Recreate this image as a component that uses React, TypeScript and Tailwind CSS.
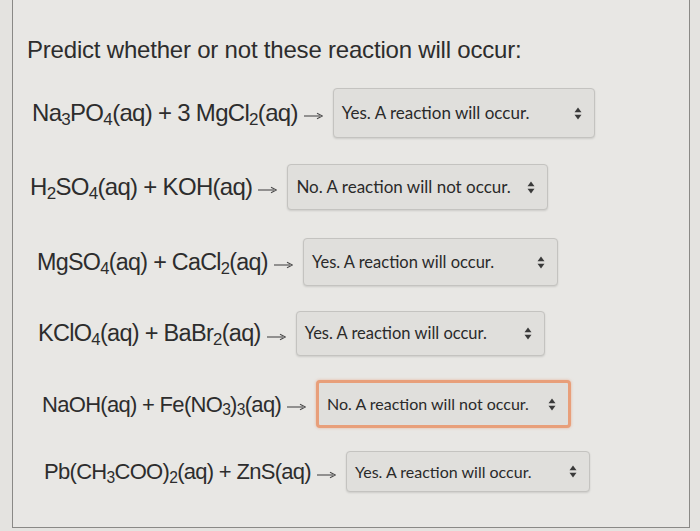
import React from 'react';

type Part = { t: string; sub?: boolean };

type Row = {
  parts: Part[];
  answer: string;
  rowClass: string;
  textClass: string;
  answerClass: string;
  selectClass: string;
  focused?: boolean;
};

const s = (t: string): Part => ({ t, sub: true });
const n = (t: string): Part => ({ t });

const rows: Row[] = [
  {
    parts: [n('Na'), s('3'), n('PO'), s('4'), n('(aq) + 3 MgCl'), s('2'), n('(aq)')],
    answer: 'Yes. A reaction will occur.',
    rowClass: 'mt-[23px] pl-[31px]',
    textClass: 'text-[24px]',
    answerClass: 'text-[17px]',
    selectClass: 'w-[262px] h-[50px]',
  },
  {
    parts: [n('H'), s('2'), n('SO'), s('4'), n('(aq) + KOH(aq)')],
    answer: 'No. A reaction will not occur.',
    rowClass: 'mt-[26px] pl-[29px]',
    textClass: 'text-[24px]',
    answerClass: 'text-[17px]',
    selectClass: 'w-[261px] h-[46px]',
  },
  {
    parts: [n('MgSO'), s('4'), n('(aq) + CaCl'), s('2'), n('(aq)')],
    answer: 'Yes. A reaction will occur.',
    rowClass: 'mt-[28px] pl-[36px]',
    textClass: 'text-[23.3px]',
    answerClass: 'text-[16.5px]',
    selectClass: 'w-[255px] h-[48px]',
  },
  {
    parts: [n('KClO'), s('4'), n('(aq) + BaBr'), s('2'), n('(aq)')],
    answer: 'Yes. A reaction will occur.',
    rowClass: 'mt-[25px] pl-[37px]',
    textClass: 'text-[23.5px]',
    answerClass: 'text-[16.5px]',
    selectClass: 'w-[249px] h-[45px]',
  },
  {
    parts: [n('NaOH(aq) + Fe(NO'), s('3'), n(')'), s('3'), n('(aq)')],
    answer: 'No. A reaction will not occur.',
    rowClass: 'mt-[24px] pl-[41px]',
    textClass: 'text-[22px]',
    answerClass: 'text-[16px]',
    selectClass: 'w-[255px] h-[48px]',
    focused: true,
  },
  {
    parts: [n('Pb(CH'), s('3'), n('COO)'), s('2'), n('(aq) + ZnS(aq)')],
    answer: 'Yes. A reaction will occur.',
    rowClass: 'mt-[23px] pl-[43px]',
    textClass: 'text-[22px]',
    answerClass: 'text-[16px]',
    selectClass: 'w-[244px] h-[41px]',
  },
];

const Arrows: React.FC = () => (
  <svg width="8" height="13" viewBox="0 0 8 13" className="shrink-0">
    <path d="M4 0.5 L7.5 5.2 L0.5 5.2 Z" fill="#3a3a3a" />
    <path d="M4 12.5 L7.5 7.8 L0.5 7.8 Z" fill="#3a3a3a" />
  </svg>
);

const YieldArrow: React.FC = () => (
  <svg width="19" height="8" viewBox="0 0 19 8" className="shrink-0 mt-[6px] ml-[6px] mr-[10px]">
    <path d="M0 4 H16" stroke="#4a4a4a" strokeWidth="1.1" />
    <path d="M13 1.2 L18.5 4 L13 6.8" fill="none" stroke="#4a4a4a" strokeWidth="1.1" />
  </svg>
);

const App: React.FC = () => {
  return (
    <div className="w-[700px] h-[531px] overflow-hidden bg-[#e4e3e0]">
      <div className="ml-[12px] mr-[10px] h-[528px] bg-[#e8e7e4] border-l border-r border-b border-[#8a8986] flex flex-col pt-[35px]">
        <h1
          className="pl-[14px] h-[30px] leading-[30px] text-[24px] text-[#2d2d2d] tracking-[-0.2px]"
          style={{ fontFamily: '"Liberation Sans", Arial, sans-serif' }}
        >
          Predict whether or not these reaction will occur:
        </h1>

        {rows.map((row, i) => (
          <div key={i} className={`flex items-center -ml-[12px] ${row.rowClass}`}>
            <span
              className={`text-[#2d2d2d] tracking-[-0.7px] whitespace-nowrap ${row.textClass}`}
              style={{ fontFamily: '"Liberation Sans", Arial, sans-serif' }}
            >
              {row.parts.map((p, j) =>
                p.sub ? (
                  <sub key={j} className="text-[0.71em]">
                    {p.t}
                  </sub>
                ) : (
                  <span key={j}>{p.t}</span>
                )
              )}
            </span>
            <YieldArrow />
            <div
              className={`flex items-center justify-between pl-[8px] pr-[12px] rounded-[4px] bg-[#e0dfdc] ${row.selectClass} ${
                row.focused
                  ? 'border-[3px] border-[#e89f7a] shadow-[0_0_3px_rgba(232,150,110,0.6)]'
                  : 'border border-[#c4c3c0] shadow-[0_1px_2px_rgba(0,0,0,0.12)]'
              }`}
            >
              <span
                className={`text-[#2a2a2a] whitespace-nowrap ${row.answerClass}`}
                style={{ fontFamily: 'Lato, "Open Sans", sans-serif' }}
              >
                {row.answer}
              </span>
              <Arrows />
            </div>
          </div>
        ))}
      </div>
    </div>
  );
};

export default App;
